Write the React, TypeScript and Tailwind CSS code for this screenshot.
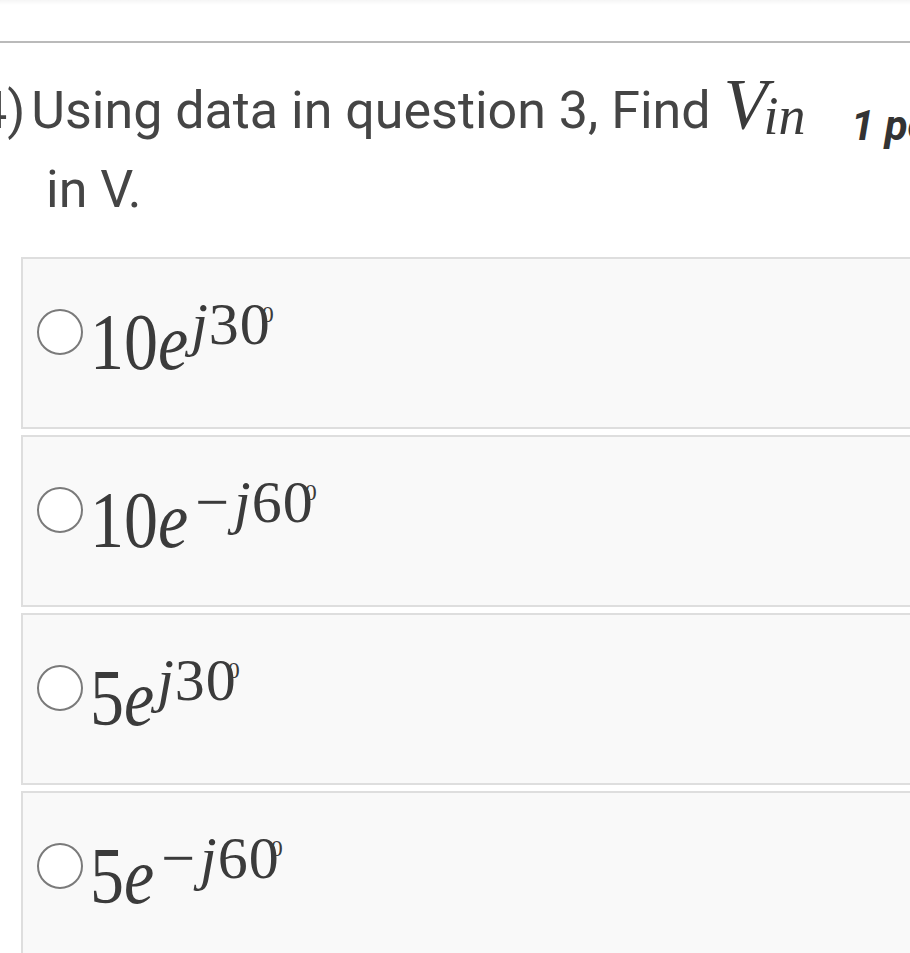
import React from "react"

const mathFont = { fontFamily: '"Liberation Serif", "Times New Roman", serif' }

function Radio() {
    return (
        <div className="mt-[50px] ml-[14px] h-[46px] w-[46px] shrink-0 rounded-full border-2 border-[#7a7a7a] bg-white" />
    )
}

// the little "0" that sits on the top right of the last digit
function Deg() {
    return <span className="relative -top-[22px] -ml-[9px] text-[24px]">0</span>
}

type Opt = { coef: string; neg: boolean; angle: string }

const options: Opt[] = [
    { coef: "10", neg: false, angle: "30" },
    { coef: "10", neg: true, angle: "60" },
    { coef: "5", neg: false, angle: "30" },
    { coef: "5", neg: true, angle: "60" },
]

function Option({ o }: { o: Opt }) {
    return (
        <div className="flex h-[172px] w-[940px] shrink-0 items-start border-2 border-[#dedede] bg-[#f9f9f9]">
            <Radio />
            <div className="mt-[53px] ml-[7px] whitespace-nowrap leading-none text-[#3b3b3b]" style={mathFont}>
                <span className="inline-block origin-[50%_84%] scale-y-[1.18] text-[68px]">
                    {o.coef}
                    <span className="italic">e</span>
                </span>
                <span className="relative -top-[25px] ml-[3px] text-[60px] tracking-[1px]">
                    {o.neg ? <span className="mx-[4px]">−</span> : null}
                    <span className="italic">j</span>
                    {o.angle}
                    <Deg />
                </span>
            </div>
        </div>
    )
}

export default function App() {
    return (
        <div className="h-[953px] w-[910px] overflow-hidden bg-white" style={{ fontFamily: 'Roboto, "Liberation Sans", sans-serif' }}>
            <div className="h-[5px] bg-gradient-to-b from-[#f5f5f5] to-white" />
            <div className="mt-[36px] h-[2px] bg-[#bababa]" />

            <div className="mt-[28px] flex">
                <div className="w-[851px] shrink-0 pl-[46px] indent-[-68px] text-[52px] leading-[79px] text-[#454545]">
                    <span className="mr-[-7px]">4)</span> Using data in question 3, Find{" "}
                    <span className="leading-[60px] text-[#3b3b3b]" style={mathFont}>
                        <span className="text-[72px] italic">V</span>
                        <span className="relative top-[6px] -ml-[4px] text-[54px] italic">in</span>
                    </span>
                    <br />
                    in V.
                </div>
                <div className="mt-[34px] whitespace-nowrap text-[42px] font-bold italic leading-none text-[#333]">
                    1 point
                </div>
            </div>

            <div className="mt-[28px] ml-[21px] flex flex-col gap-[6px]">
                {options.map((o, i) => (
                    <Option key={i} o={o} />
                ))}
            </div>
        </div>
    )
}
